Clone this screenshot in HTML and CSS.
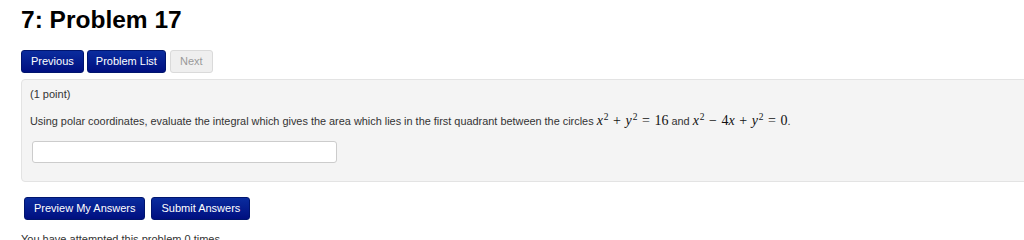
FILE: index.html
```html
<!DOCTYPE html>
<html>
<head>
<meta charset="utf-8">
<link rel="stylesheet" href="styles.css">
</head>
<body>
<div class="page">
  <h2 class="title">7: Problem 17</h2>
  <div class="nav">
    <button class="btn btn-primary btn-prev">Previous</button>
    <button class="btn btn-primary btn-list">Problem List</button>
    <button class="btn btn-disabled">Next</button>
  </div>
  <div class="panel">
    <p class="points">(1 point)</p>
    <p class="question">Using polar coordinates, evaluate the integral which gives the area which lies in the first quadrant between the circles <span class="math"><span class="mi">x</span><sup>2</sup><span class="mo">+</span><span class="mi">y</span><sup>2</sup><span class="mo">=</span><span class="mn">16</span></span> and <span class="math"><span class="mi">x</span><sup>2</sup><span class="mo">−</span><span class="mn">4</span><span class="mi">x</span><span class="mo">+</span><span class="mi">y</span><sup>2</sup><span class="mo">=</span><span class="mn">0</span></span>.</p>
    <input class="answer" type="text">
  </div>
  <div class="actions">
    <button class="btn btn-primary btn-preview">Preview My Answers</button>
    <button class="btn btn-primary btn-submit">Submit Answers</button>
  </div>
  <p class="attempts">You have attempted this problem 0 times.</p>
</div>
</body>
</html>
```

FILE: styles.css
```css
html, body {
  margin: 0;
  padding: 0;
  overflow: hidden;
  background: #ffffff;
}
body {
  font-family: "Liberation Sans", Arial, sans-serif;
  font-size: 11px;
  color: #333333;
}
.page {
  padding-left: 21px;
  width: 1020px;
}
.title {
  margin: 0;
  padding-top: 7px;
  font-size: 24.5px;
  line-height: 26px;
  font-weight: bold;
  color: #000000;
  height: 26px;
}
.nav {
  display: flex;
  gap: 3px;
  margin-top: 17px;
  height: 23px;
}
.btn {
  font-family: "Liberation Sans", Arial, sans-serif;
  font-size: 11px;
  height: 23px;
  padding: 0 9px;
  border-radius: 3px;
  line-height: 21px;
  cursor: pointer;
}
.btn-primary {
  color: #ffffff;
  border: 1px solid #00156e;
  background: linear-gradient(#0a2c9e, #000f80);
}
.btn-list {
  padding: 0 8px;
}
.btn-disabled {
  margin-left: 1px;
  color: #9a9a9a;
  border: 1px solid #dadada;
  background: #efefef;
  padding: 0 9px;
}
.panel {
  margin-top: 6px;
  height: 101px;
  border: 1px solid #e3e3e3;
  border-radius: 4px;
  background: #f4f4f4;
  padding: 0 8px;
  box-sizing: content-box;
}
.points {
  margin: 7px 0 0 0;
  line-height: 14px;
}
.question {
  margin: 12px 0 0 0;
  line-height: 16px;
  font-size: 10.9px;
}
.math {
  font-family: "Liberation Serif", "Times New Roman", serif;
  font-size: 14px;
  color: #111111;
}
.mi {
  font-style: italic;
}
.math sup {
  font-size: 9.5px;
  line-height: 0;
  vertical-align: 5px;
  margin-left: 1px;
}
.mo {
  margin: 0 4.5px;
}
.answer {
  display: block;
  margin: 12px 0 0 2px;
  width: 305px;
  height: 22px;
  box-sizing: border-box;
  border: 1px solid #cccccc;
  border-radius: 3px;
  background: #ffffff;
}
.actions {
  display: flex;
  gap: 6px;
  margin: 15px 0 0 3px;
}
.btn-preview, .btn-submit {
  padding: 0 9px;
}
.attempts {
  margin: 12px 0 0 0;
  line-height: 14px;
}
```
